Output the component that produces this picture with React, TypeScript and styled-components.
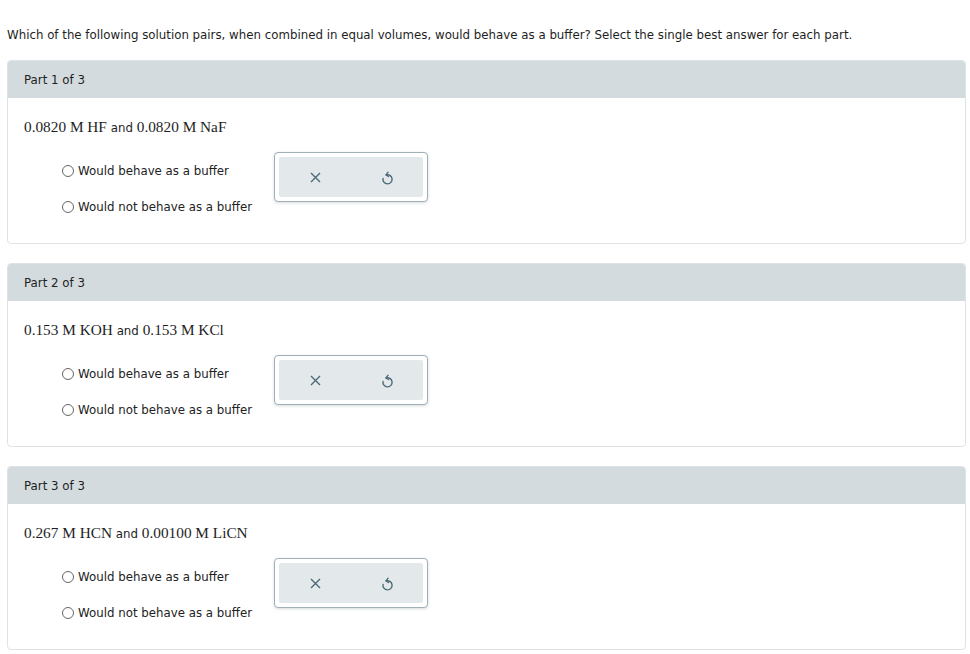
import React from 'react'
import styled, { createGlobalStyle } from 'styled-components'

const GlobalStyle = createGlobalStyle`
  body {
    margin: 0;
    background: #ffffff;
    font-family: "DejaVu Sans", Verdana, sans-serif;
    color: #222;
  }
`;

const Page = styled.div`
  padding: 26px 4px 0 7px;
  height: 654px;
  overflow: hidden;
  box-sizing: border-box;
`;

const Intro = styled.p`
  margin: 0 0 16px 0;
  font-size: 11.8px;
  line-height: 18px;
  color: #1e1e1e;
`;

const PartList = styled.div`
  display: flex;
  flex-direction: column;
  gap: 19px;
`;

const Card = styled.section`
  border: 1px solid #dde3e6;
  border-radius: 4px;
  overflow: hidden;
  background: #fff;
`;

const CardHeader = styled.div`
  height: 37px;
  background: #d3dbde;
  display: flex;
  align-items: center;
  padding-left: 16px;
  font-size: 11.8px;
  color: #1e1e1e;
`;

const CardBody = styled.div`
  height: 145px;
  padding: 20px 16px 0 16px;
  box-sizing: border-box;
`;

const Formula = styled.div`
  font-family: "Liberation Serif", "Times New Roman", serif;
  font-size: 15.3px;
  color: #1e1e1e;
  line-height: 18px;
  margin-bottom: 25px;
`;

const And = styled.span`
  font-family: "DejaVu Sans", Verdana, sans-serif;
  font-size: 11.8px;
`;

const AnswerRow = styled.div`
  display: flex;
  align-items: flex-start;
`;

const Options = styled.div`
  display: flex;
  flex-direction: column;
  gap: 18px;
  padding-left: 38px;
  width: 212px;
`;

const Option = styled.label`
  display: flex;
  align-items: center;
  gap: 4px;
  font-size: 11.8px;
  color: #222;
  line-height: 18px;
`;

const Radio = styled.span`
  width: 10px;
  height: 10px;
  border: 1px solid #666;
  border-radius: 50%;
  display: inline-block;
`;

const ToolBox = styled.div`
  margin-top: -10px;
  width: 154px;
  height: 50px;
  box-sizing: border-box;
  border: 1px solid #9fb0b8;
  border-radius: 4px;
  padding: 4px;
  box-shadow: 0 1px 3px rgba(90, 110, 120, 0.25);
  background: #fff;
`;

const ToolInner = styled.div`
  height: 100%;
  border-radius: 2px;
  background: #e3e8ea;
  display: flex;
  align-items: center;
  justify-content: space-between;
  padding: 0 26px;
`;

const IconButton = styled.button`
  border: none;
  background: transparent;
  padding: 0;
  width: 20px;
  height: 20px;
  display: flex;
  align-items: center;
  justify-content: center;
  color: #4b6a77;
`;

const ClearIcon = () => (
  <svg width="11" height="11" viewBox="0 0 11 11" fill="none" stroke="currentColor" strokeWidth="1.4">
    <path d="M1 1 L10 10 M10 1 L1 10" />
  </svg>
);

const UndoIcon = () => (
  <svg width="13" height="16" viewBox="0 0 11 14" fill="none" stroke="currentColor" strokeWidth="1.2" strokeLinecap="round" strokeLinejoin="round">
    <path d="M4.3 5.2 A4 4 0 1 1 1.6 8.2" />
    <path d="M6 2.8 L4.2 5.1 L6.4 6.6" />
  </svg>
);

type Part = {
  n: number
  a: string
  b: string
}

const parts: Part[] = [
  { n: 1, a: '0.0820 M HF', b: '0.0820 M NaF' },
  { n: 2, a: '0.153 M KOH', b: '0.153 M KCl' },
  { n: 3, a: '0.267 M HCN', b: '0.00100 M LiCN' },
];

const PartCard = ({ n, a, b }: Part) => (
  <Card>
    <CardHeader>Part {n} of 3</CardHeader>
    <CardBody>
      <Formula>
        {a} <And>and</And> {b}
      </Formula>
      <AnswerRow>
        <Options>
          <Option><Radio />Would behave as a buffer</Option>
          <Option><Radio />Would not behave as a buffer</Option>
        </Options>
        <ToolBox>
          <ToolInner>
            <IconButton><ClearIcon /></IconButton>
            <IconButton><UndoIcon /></IconButton>
          </ToolInner>
        </ToolBox>
      </AnswerRow>
    </CardBody>
  </Card>
);

const App = () => {
  return (
    <>
      <GlobalStyle />
      <Page>
        <Intro>
          Which of the following solution pairs, when combined in equal volumes, would behave as a buffer? Select the single best answer for each part.
        </Intro>
        <PartList>
          {parts.map((p) => (
            <PartCard key={p.n} {...p} />
          ))}
        </PartList>
      </Page>
    </>
  )
}

export default App
